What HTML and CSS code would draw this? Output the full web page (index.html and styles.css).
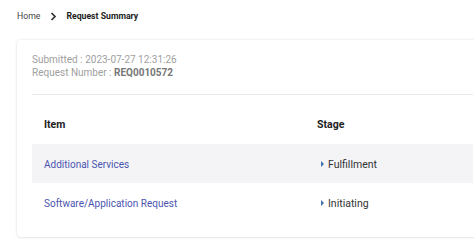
FILE: index.html
```html
<!DOCTYPE html>
<html>
<head>
<meta charset="utf-8">
<link rel="stylesheet" href="styles.css">
</head>
<body>
<nav class="crumbs">
  <span class="crumb">Home</span>
  <svg class="sep" width="7" height="9" viewBox="0 0 7 9"><path d="M1.5 1 L5 4.5 L1.5 8" fill="none" stroke="#333" stroke-width="1.7"/></svg>
  <span class="crumb current">Request Summary</span>
</nav>
<section class="card">
  <div class="meta">
    <div class="meta-line">Submitted : 2023-07-27 12:31:26</div>
    <div class="meta-line">Request Number : <b>REQ0010572</b></div>
  </div>
  <table class="items">
    <thead>
      <tr><th class="c1">Item</th><th class="c2">Stage</th></tr>
    </thead>
    <tbody>
      <tr class="alt"><td class="c1"><a class="link">Additional Services</a></td><td class="c2"><span class="tri"></span>Fulfillment</td></tr>
      <tr><td class="c1"><a class="link">Software/Application Request</a></td><td class="c2"><span class="tri"></span>Initiating</td></tr>
    </tbody>
  </table>
</section>
</body>
</html>
```
FILE: styles.css
```css
html, body { margin: 0; padding: 0; background: #fff; }
body { font-family: Roboto, "Liberation Sans", sans-serif; color: #333; overflow: hidden; width: 474px; height: 249px; }
.crumbs { display: flex; align-items: center; height: 32px; padding-left: 17px; font-size: 8.7px; }
.crumb { color: #444; }
.sep { margin: 0 9px 0 10px; }
.crumb.current { font-weight: 700; color: #222; }
.card {
  margin: 8px -20px 0 17px;
  background: #fff;
  border-radius: 4px;
  box-shadow: 0 0 3px rgba(0,0,0,0.12), 0 1px 2px rgba(0,0,0,0.05);
  padding: 13px 21px 15px 15px;
}
.meta { font-size: 10px; color: #a0a0a0; line-height: 13px; padding-bottom: 15px; border-bottom: 1px solid #e9e9e9; }
.meta-line { height: 13px; }
.meta b { color: #777; font-weight: 700; }
.items { width: 441px; border-collapse: collapse; font-size: 10.5px; table-layout: fixed; }
.items th { text-align: left; font-weight: 700; color: #222; height: 49px; padding: 9px 12px 0; box-sizing: border-box; }
.items td { height: 39px; padding: 1px 12px 0; box-sizing: border-box; }
.items tr.alt td { background: #f4f4f7; }
.c1 { width: 273px; }
.link { color: #4b55b0; text-decoration: none; font-size: 10px; }
.tri { display: inline-block; width: 0; height: 0; border-top: 3px solid transparent; border-bottom: 3px solid transparent; border-left: 3.5px solid #3f73b0; margin: 0 4px 1px 4px; }
```
